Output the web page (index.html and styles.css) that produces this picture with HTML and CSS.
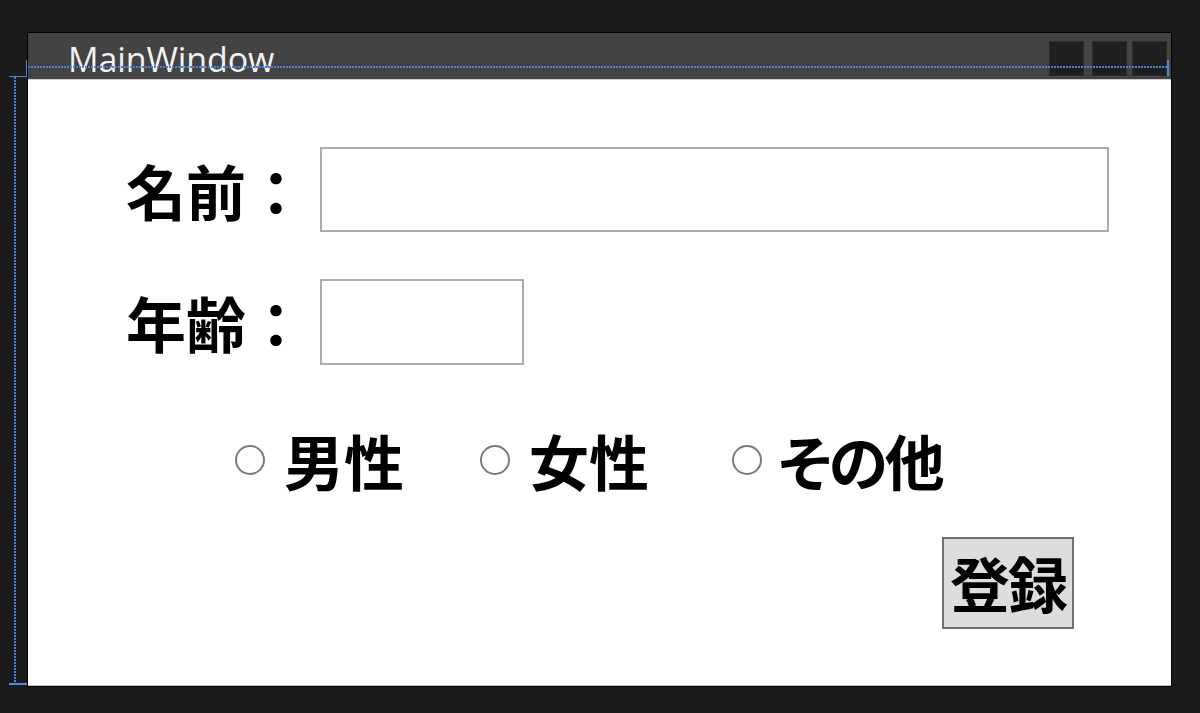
FILE: index.html
```html
<!DOCTYPE html>
<html lang="ja">
<head>
<meta charset="utf-8">
<title>MainWindow</title>
<link rel="stylesheet" href="styles.css">
</head>
<body>
<div class="desk">
  <div class="window">
    <div class="titlebar">
      <span class="title">MainWindow</span>
      <div class="caps">
        <span class="cap cap-min"></span>
        <span class="cap cap-max"></span>
        <span class="cap cap-close"></span>
      </div>
    </div>
    <div class="client">
      <div class="form">
        <div class="label">名前：</div>
        <div class="textbox textbox-name"></div>
        <div class="label">年齢：</div>
        <div class="textbox textbox-age"></div>
      </div>
      <div class="radios">
        <label class="radio"><span class="dot"></span><span class="rtext">男性</span></label>
        <label class="radio"><span class="dot"></span><span class="rtext">女性</span></label>
        <label class="radio radio-other"><span class="dot"></span><span class="rtext">その他</span></label>
      </div>
      <div class="actions">
        <div class="btn">登録</div>
      </div>
    </div>
  </div>
  <div class="guide guide-h"></div>
  <div class="guide guide-hbar"></div>
  <div class="guide guide-ltop"></div>
  <div class="guide guide-ltick"></div>
  <div class="guide guide-v"></div>
  <div class="guide guide-btick"></div>
</div>
</body>
</html>
```

FILE: styles.css
```css
html, body {
  margin: 0;
  padding: 0;
  background: #1b1b1b;
  width: 1200px;
  height: 713px;
  overflow: hidden;
}

.desk {
  position: relative;
  width: 1200px;
  height: 713px;
  padding: 32px 0 0 27px;
  box-sizing: border-box;
}

.window {
  width: 1145px;
  border: 1px solid #000;
  box-sizing: border-box;
  background: #fff;
}

.titlebar {
  height: 46px;
  background: #434343;
  border-bottom: 1px solid #cfcfcf;
  display: flex;
  align-items: center;
  justify-content: space-between;
}

.title {
  font-family: "Open Sans", "Noto Sans", sans-serif;
  font-size: 34px;
  color: #f2f2f2;
  margin-left: 40px;
  margin-top: 5px;
  letter-spacing: -0.1px;
}

.caps {
  display: flex;
  align-items: center;
  margin-right: 4px;
  margin-top: 4px;
}

.cap {
  width: 35px;
  height: 35px;
  box-sizing: border-box;
  background: #1f1f1f;
  border: 1px solid #2c2c2c;
}

.cap-max {
  margin-left: 8px;
}

.cap-close {
  margin-left: 5px;
}

.client {
  height: 606px;
  border-bottom: 1px solid #c4c4c4;
  box-sizing: border-box;
  padding: 67px 0 0 98px;
  font-family: "Noto Sans CJK JP", "Noto Sans CJK SC", sans-serif;
  font-weight: 700;
  color: #000;
}

.form {
  display: grid;
  grid-template-columns: 194px 789px;
  row-gap: 47px;
  align-items: center;
}

.label {
  font-size: 60px;
  line-height: 70px;
}

.textbox {
  border: 2px solid #acacac;
  box-sizing: border-box;
  background: #fff;
}

.textbox-name {
  height: 85px;
  width: 789px;
}

.textbox-age {
  height: 86px;
  width: 204px;
}

.radios {
  display: flex;
  align-items: center;
  margin: 60px 0 0 109px;
}

.radio {
  display: flex;
  align-items: center;
  margin-right: 76px;
}

.radio-other {
  margin-left: 7px;
}

.dot {
  width: 30px;
  height: 30px;
  box-sizing: border-box;
  border: 2px solid #7a7a7a;
  border-radius: 50%;
  margin-right: 19px;
}

.radio-other .dot {
  margin-right: 16px;
}

.rtext {
  font-size: 60px;
  line-height: 70px;
  font-feature-settings: "palt";
}

.radio-other .rtext {
  letter-spacing: -3px;
}

.actions {
  display: flex;
  justify-content: flex-end;
  padding-right: 97px;
  margin-top: 42px;
}

.btn {
  width: 132px;
  height: 92px;
  box-sizing: border-box;
  border: 2px solid #707070;
  background: #dddddd;
  font-size: 60px;
  line-height: 86px;
  text-align: center;
  letter-spacing: -2px;
}

.guide {
  position: absolute;
}

.guide-h {
  left: 28px;
  top: 66px;
  width: 1140px;
  height: 2px;
  background: repeating-linear-gradient(90deg, #4a80dc 0 2px, transparent 2px 3px);
}

.guide-hbar {
  left: 1167px;
  top: 60px;
  width: 2px;
  height: 16px;
  background: #4f86e0;
}

.guide-ltop {
  left: 26px;
  top: 60px;
  width: 1px;
  height: 17px;
  background: #4f86e0;
}

.guide-ltick {
  left: 9px;
  top: 76px;
  width: 18px;
  height: 1px;
  background: #4f86e0;
}

.guide-v {
  left: 14px;
  top: 77px;
  width: 2px;
  height: 606px;
  background: repeating-linear-gradient(180deg, #4a80dc 0 2px, transparent 2px 3px);
}

.guide-btick {
  left: 9px;
  top: 683px;
  width: 18px;
  height: 2px;
  background: #4f86e0;
}
```
